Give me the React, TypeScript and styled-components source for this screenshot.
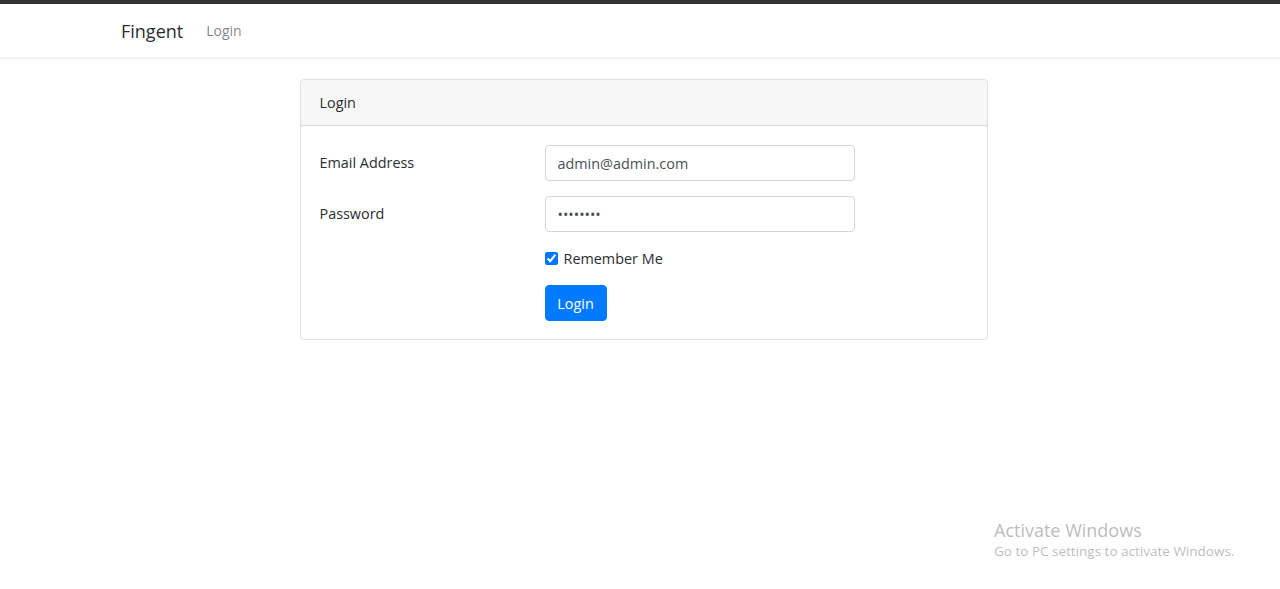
import styled, { createGlobalStyle } from "styled-components"

const GlobalStyle = createGlobalStyle`
  html, body {
    margin: 0;
    padding: 0;
    background: #fff;
    font-family: "Open Sans", "Noto Sans", "Liberation Sans", sans-serif;
    font-size: 14px;
    line-height: 1.6;
    color: #212529;
  }
  * { box-sizing: border-box; }
`

const Page = styled.div`
  min-height: 589px;
  border-top: 4px solid #333;
  position: relative;
`

const Navbar = styled.nav`
  height: 53px;
  padding-top: 2px;
  background: #fff;
  box-shadow: 0 2px 3px rgba(0, 0, 0, 0.06);
  display: flex;
  align-items: center;
`

const NavInner = styled.div`
  width: 1038px;
  margin: 0 auto;
  display: flex;
  align-items: center;
  gap: 23px;
`

const Brand = styled.a`
  font-size: 18px;
  color: #2a2d31;
  text-decoration: none;
`

const NavLink = styled.a`
  font-size: 14px;
  color: rgba(0, 0, 0, 0.5);
  text-decoration: none;
`

const Main = styled.main`
  padding-top: 22px;
  display: flex;
  justify-content: center;
`

const Card = styled.div`
  width: 688px;
  margin-left: 7px;
  border: 1px solid rgba(0, 0, 0, 0.125);
  border-radius: 4px;
  overflow: hidden;
`

const CardHeader = styled.div`
  height: 46px;
  padding: 0 19px;
  display: flex;
  align-items: center;
  background: #f7f7f7;
  border-bottom: 1px solid rgba(0, 0, 0, 0.125);
  font-size: 14.4px;
  color: #2a2d31;
`

const CardBody = styled.form`
  padding: 19px 19px 18px;
  display: flex;
  flex-direction: column;
  gap: 15px;
`

const Row = styled.div`
  display: grid;
  grid-template-columns: 225px 310px;
  align-items: center;
`

const Label = styled.label`
  font-size: 14.4px;
  color: #2a2d31;
`

const Input = styled.input`
  height: 36px;
  width: 310px;
  padding: 0 12px;
  border: 1px solid #ced4da;
  border-radius: 4px;
  font-family: inherit;
  font-size: 14.4px;
  color: #495057;
  outline: none;
`

const CheckLabel = styled.label`
  display: flex;
  align-items: center;
  gap: 6px;
  font-size: 14.4px;
  color: #2a2d31;

  input {
    margin: 0;
    width: 13px;
    height: 13px;
    accent-color: #0075ff;
  }
`

const Button = styled.button`
  width: 62px;
  height: 36px;
  background: #007bff;
  color: #fff;
  border: 1px solid #007bff;
  border-radius: 4px;
  font-family: inherit;
  font-size: 14.4px;
  cursor: pointer;
`

const Watermark = styled.div`
  position: absolute;
  left: 994px;
  top: 515px;
  color: rgba(120, 120, 120, 0.5);
  line-height: 1.3;

  h2 {
    margin: 0;
    font-size: 18px;
    font-weight: 400;
  }

  p {
    margin: 1px 0 0;
    font-size: 13.5px;
  }
`

export default function App() {
  return (
    <Page>
      <GlobalStyle />
      <Navbar>
        <NavInner>
          <Brand href="#">Fingent</Brand>
          <NavLink href="#">Login</NavLink>
        </NavInner>
      </Navbar>

      <Main>
        <Card>
          <CardHeader>Login</CardHeader>
          <CardBody onSubmit={e => e.preventDefault()}>
            <Row>
              <Label htmlFor="email">Email Address</Label>
              <Input id="email" type="email" defaultValue="admin@admin.com" />
            </Row>
            <Row>
              <Label htmlFor="password">Password</Label>
              <Input id="password" type="password" defaultValue="password" />
            </Row>
            <Row>
              <span />
              <CheckLabel>
                <input type="checkbox" defaultChecked />
                Remember Me
              </CheckLabel>
            </Row>
            <Row>
              <span />
              <div>
                <Button type="submit">Login</Button>
              </div>
            </Row>
          </CardBody>
        </Card>
      </Main>

      <Watermark>
        <h2>Activate Windows</h2>
        <p>Go to PC settings to activate Windows.</p>
      </Watermark>
    </Page>
  )
}
